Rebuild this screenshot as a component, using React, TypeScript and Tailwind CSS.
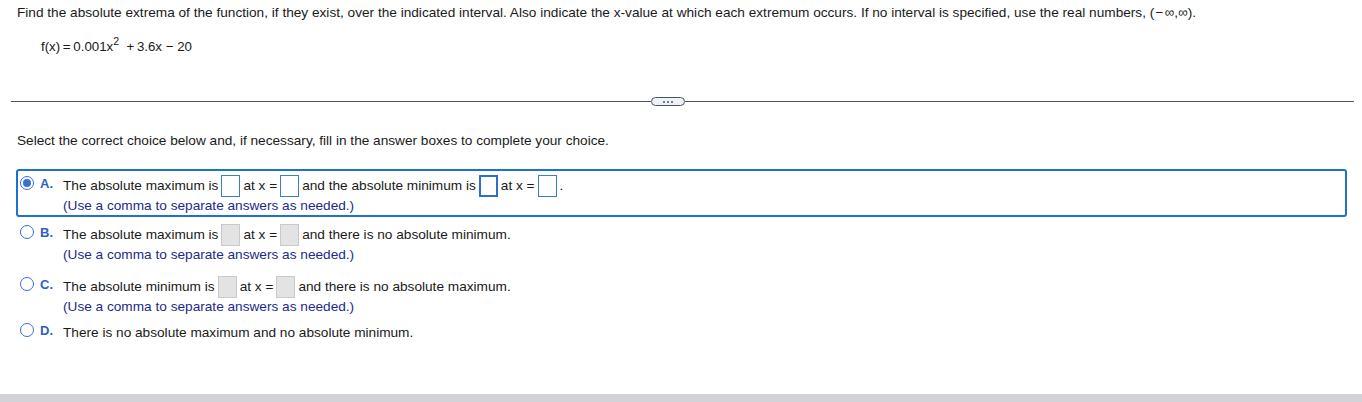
import React from "react";

const Box: React.FC<{ variant?: "open" | "focus" | "off" }> = ({ variant = "open" }) => {
  const cls =
    variant === "focus"
      ? "border-2 border-[#2e6fc4] bg-white"
      : variant === "off"
      ? "border border-[#c9c9c9] bg-[#e3e3e3]"
      : "border border-[#3a7fcf] bg-white";
  return <span className={`inline-block w-[19px] h-[22px] align-middle mx-[3px] ${cls}`} />;
};

const Radio: React.FC<{ checked?: boolean }> = ({ checked }) => (
  <span className="w-[14px] h-[14px] rounded-full border-[1.5px] border-[#3a6fd6] bg-white flex items-center justify-center shrink-0">
    {checked && <span className="w-[8px] h-[8px] rounded-full bg-[#3a6fd6]" />}
  </span>
);

const Choice: React.FC<{
  letter: string;
  checked?: boolean;
  selected?: boolean;
  children: React.ReactNode;
  hint?: boolean;
  className?: string;
}> = ({ letter, checked, selected, children, hint, className = "" }) => (
  <div
    className={`flex items-start pl-[2px] pt-[4px] pb-[0px] border-2 ${
      selected ? "border-[#1b74c9] rounded-[3px]" : "border-transparent"
    } ${className}`}
  >
    <div className="flex items-center gap-[6px] w-[43px] shrink-0 pt-[1px]">
      <Radio checked={checked} />
      <span className="text-[#2f5fc4] font-bold text-[13px] leading-none">{letter}</span>
    </div>
    <div className="flex flex-col">
      <div className="flex items-center h-[22px] whitespace-pre">{children}</div>
      {hint && <div className="text-[#1c2a8c] leading-[18px]">(Use a comma to separate answers as needed.)</div>}
    </div>
  </div>
);

export default function App() {
  return (
    <div
      className="w-[1362px] h-[402px] bg-white text-[13.65px] text-[#1a1a1a] flex flex-col overflow-hidden"
      style={{ fontFamily: '"Liberation Sans", Arial, sans-serif' }}
    >
      <div className="px-[17px] pt-[5px]">
        <p className="leading-[16px]">
          Find the absolute extrema of the function, if they exist, over the indicated interval. Also indicate the
          x-value at which each extremum occurs. If no interval is specified, use the real numbers, (&#8202;−&#8202;∞,∞).
        </p>
        <p className="pl-[24px] mt-[18px] text-[13.3px] leading-[16px] whitespace-pre">
          f(x)&#8201;=&#8201;0.001x<sup className="text-[10.5px] relative -top-[6px]">2</sup>{"  "}+&#8201;3.6x − 20
        </p>
      </div>

      <div className="ml-[11px] mr-[8px] mt-[42px] flex items-center">
        <div className="w-[640px] h-px bg-[#4b5563]" />
        <div className="w-[34px] h-[9px] rounded-full border border-[#4b5563] bg-[#eef1f5] flex items-center justify-center gap-[2px]">
          <span className="w-[2px] h-[2px] bg-[#4b5563] rounded-full" />
          <span className="w-[2px] h-[2px] bg-[#4b5563] rounded-full" />
          <span className="w-[2px] h-[2px] bg-[#4b5563] rounded-full" />
        </div>
        <div className="flex-1 h-px bg-[#4b5563]" />
      </div>

      <p className="px-[17px] mt-[27px] leading-[16px]">
        Select the correct choice below and, if necessary, fill in the answer boxes to complete your choice.
      </p>

      <div className="pl-[16px] pr-[15px] mt-[20px] flex flex-col">
        <Choice letter="A." checked selected hint>
          The absolute maximum is
          <Box />
          at x =
          <Box />
          and the absolute minimum is
          <Box variant="focus" />
          at x =
          <Box />.
        </Choice>
        <Choice letter="B." hint className="mt-[1px]">
          The absolute maximum is
          <Box variant="off" />
          at x =
          <Box variant="off" />
          and there is no absolute minimum.
        </Choice>
        <Choice letter="C." hint className="mt-[4px]">
          The absolute minimum is
          <Box variant="off" />
          at x =
          <Box variant="off" />
          and there is no absolute maximum.
        </Choice>
        <Choice letter="D." className="!pt-[2px]">
          There is no absolute maximum and no absolute minimum.
        </Choice>
      </div>

      <div className="mt-auto h-[8px] bg-[#d1d3d8]" />
    </div>
  );
}
